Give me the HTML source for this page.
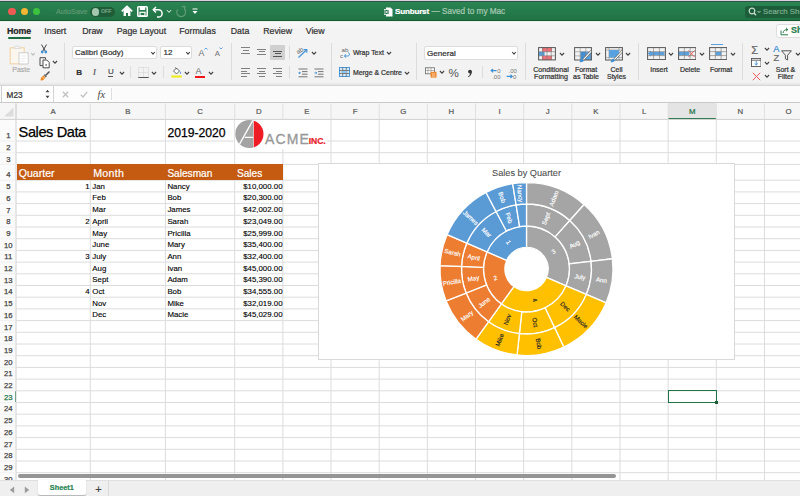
<!DOCTYPE html><html><head><meta charset="utf-8"><style>
*{margin:0;padding:0;box-sizing:border-box}
html,body{width:800px;height:496px;overflow:hidden;background:#fff;font-family:"Liberation Sans", sans-serif}
.a{position:absolute;white-space:nowrap;-webkit-text-stroke-width:0.22px}
</style></head><body><div class="a" style="left:0;top:0;width:800px;height:1px;background:#dccfe3"></div>
<div class="a" style="left:0;top:1px;width:800px;height:20px;background:linear-gradient(#2c8553,#1f7144)"></div>
<div class="a" style="left:0;top:1px;width:800px;height:1px;background:#2b5a43"></div>
<div class="a" style="left:0;top:20px;width:800px;height:1px;background:#175b35"></div>
<div class="a" style="left:0;top:21px;width:800px;height:1px;background:#e9eee9"></div>
<div class="a" style="left:0;top:22px;width:800px;height:63px;background:linear-gradient(#f7f7f7 0px,#f3f3f3 8px,#f2f2f2 63px)"></div>
<div class="a" style="left:8.2px;top:7.8999999999999995px;width:7.6px;height:7.6px;border-radius:50%;background:#ee5a54"></div>
<div class="a" style="left:20.7px;top:7.8999999999999995px;width:7.6px;height:7.6px;border-radius:50%;background:#f5b534"></div>
<div class="a" style="left:32.7px;top:7.8999999999999995px;width:7.6px;height:7.6px;border-radius:50%;background:#3cc23f"></div>
<div class="a" style="left:56.00px;top:7.31px;font-size:7.3px;line-height:9.12px;color:#5f9872">AutoSave</div>
<div class="a" style="left:90px;top:6.5px;width:25px;height:10px;border-radius:5px;background:#1f5d39"></div>
<div class="a" style="left:91.5px;top:8px;width:7.5px;height:7.5px;border-radius:50%;background:#a3c8ae"></div>
<div class="a" style="left:101px;top:8px;font-size:5.2px;font-weight:bold;color:#6f9f80;line-height:7px">OFF</div>
<svg class="a" style="left:121px;top:4.5px" width="12" height="12" viewBox="0 0 12 12"><path d="M0.8 6.4 L6 1.4 L11.2 6.4" fill="none" stroke="#fff" stroke-width="1.7" stroke-linejoin="miter"/><path d="M2.6 5.6 L6 2.6 L9.4 5.6 V11 H7 V8 H5 V11 H2.6 Z" fill="#fff"/></svg>
<svg class="a" style="left:137px;top:6px" width="11" height="11" viewBox="0 0 11 11"><rect x="0.8" y="0.8" width="9.4" height="9.4" rx="0.8" fill="none" stroke="#fff" stroke-width="1.5"/><rect x="2.8" y="1" width="5.4" height="3" fill="#fff"/><rect x="3" y="6.3" width="5" height="3.5" fill="none" stroke="#fff" stroke-width="1.2"/></svg>
<svg class="a" style="left:152px;top:5px" width="12" height="13" viewBox="0 0 12 13"><path d="M4 2 L1.3 4.8 L4 7.6" fill="none" stroke="#fff" stroke-width="1.5"/><path d="M1.5 4.8 H6.5 A3.6 3.6 0 0 1 6.5 12 H5" fill="none" stroke="#fff" stroke-width="1.5"/></svg>
<svg class="a" style="left:166px;top:9px" width="6" height="5" viewBox="0 0 6 5"><path d="M1 1.2 L3 3.4 L5 1.2" fill="none" stroke="#fff" stroke-width="1"/></svg>
<svg class="a" style="left:175px;top:4.5px" width="12" height="13" viewBox="0 0 12 13"><path d="M2.6 4.6 A4.4 4.4 0 1 0 9.4 4.2" fill="none" stroke="#5f9c74" stroke-width="1.3"/><path d="M6.8 1.6 L9.9 1.4 L9.6 4.6" fill="none" stroke="#5f9c74" stroke-width="1.3"/></svg>
<svg class="a" style="left:192px;top:8px" width="6" height="7" viewBox="0 0 6 7"><rect x="0.5" y="0.5" width="5" height="1" fill="#fff"/><path d="M0.5 3 L3 6 L5.5 3 Z" fill="#fff"/></svg>
<svg class="a" style="left:383.5px;top:6.5px" width="9" height="10" viewBox="0 0 9 10"><path d="M2 0.5 H6.5 L8.5 2.5 V9.5 H2 Z" fill="#fff"/><rect x="0" y="2.5" width="5" height="5" fill="#1f7145" stroke="#fff" stroke-width="0.8"/><path d="M1.3 3.6 L3.7 6.4 M3.7 3.6 L1.3 6.4" stroke="#fff" stroke-width="0.9"/></svg>
<div class="a" style="left:395.00px;top:6.73px;font-size:8.1px;line-height:10.12px;color:#fff;font-weight:bold;letter-spacing:-0.2px">Sunburst</div>
<div class="a" style="left:431.50px;top:6.63px;font-size:8.2px;line-height:10.25px;color:#a5c9b2">— Saved to my Mac</div>
<div class="a" style="left:745px;top:5.5px;width:70px;height:12px;border-radius:3px;background:#1c5e39"></div>
<svg class="a" style="left:748px;top:6.5px" width="14" height="10" viewBox="0 0 14 10"><circle cx="4" cy="4" r="2.8" fill="none" stroke="#c7dccd" stroke-width="1.2"/><path d="M6 6 L8 8.3" stroke="#c7dccd" stroke-width="1.4"/><path d="M9.5 4 L11 5.5 L12.5 4" fill="none" stroke="#c7dccd" stroke-width="0.9"/></svg>
<div class="a" style="left:763.00px;top:6.82px;font-size:7.8px;line-height:9.75px;color:#7dab8e">Search Sheet</div>
<div class="a" style="left:7.10px;top:25.95px;font-size:8.8px;line-height:11.0px;color:#333;font-weight:bold;letter-spacing:-0.1px;color:#262626">Home</div>
<div class="a" style="left:44.20px;top:25.95px;font-size:8.8px;line-height:11.0px;color:#333;">Insert</div>
<div class="a" style="left:82.20px;top:25.95px;font-size:8.8px;line-height:11.0px;color:#333;">Draw</div>
<div class="a" style="left:116.70px;top:25.95px;font-size:8.8px;line-height:11.0px;color:#333;">Page Layout</div>
<div class="a" style="left:179.20px;top:25.95px;font-size:8.8px;line-height:11.0px;color:#333;">Formulas</div>
<div class="a" style="left:230.70px;top:25.95px;font-size:8.8px;line-height:11.0px;color:#333;">Data</div>
<div class="a" style="left:263.20px;top:25.95px;font-size:8.8px;line-height:11.0px;color:#333;">Review</div>
<div class="a" style="left:305.70px;top:25.95px;font-size:8.8px;line-height:11.0px;color:#333;">View</div>
<div class="a" style="left:7.5px;top:37px;width:23px;height:1.6px;background:#1d6b40;border-radius:1px"></div>
<div class="a" style="left:776px;top:23.8px;width:40px;height:14px;border-radius:3px;background:#fff;border:1px solid #dedede"></div>
<svg class="a" style="left:780px;top:26px" width="10" height="10" viewBox="0 0 10 10"><path d="M1 4.5 V8.8 H8" fill="none" stroke="#2a7a4c" stroke-width="1"/><path d="M3 7 C3.5 4.5 5 3.5 7.5 3.5 M6 1.8 L7.8 3.5 L6 5.2" fill="none" stroke="#2a7a4c" stroke-width="1"/></svg>
<div class="a" style="left:791px;top:25px;font-size:9px;font-weight:bold;color:#2a7a4c;line-height:11px">Share</div>
<div class="a" style="left:0;top:81.5px;width:800px;height:3.5px;background:linear-gradient(rgba(0,0,0,0),rgba(0,0,0,0.06))"></div>
<div class="a" style="left:0;top:84.5px;width:800px;height:1px;background:#d6d6d6"></div>
<div class="a" style="left:64.00px;top:42.5px;width:1px;height:37.5px;background:#dcdcdc"></div>
<div class="a" style="left:231.20px;top:42.5px;width:1px;height:37.5px;background:#dcdcdc"></div>
<div class="a" style="left:330.50px;top:42.5px;width:1px;height:37.5px;background:#dcdcdc"></div>
<div class="a" style="left:415.50px;top:42.5px;width:1px;height:37.5px;background:#dcdcdc"></div>
<div class="a" style="left:524.70px;top:42.5px;width:1px;height:37.5px;background:#dcdcdc"></div>
<div class="a" style="left:637.70px;top:42.5px;width:1px;height:37.5px;background:#dcdcdc"></div>
<div class="a" style="left:741.80px;top:42.5px;width:1px;height:37.5px;background:#dcdcdc"></div>
<div class="a" style="left:130.10px;top:66px;width:1px;height:12px;background:#dcdcdc"></div>
<div class="a" style="left:162.90px;top:66px;width:1px;height:12px;background:#dcdcdc"></div>
<div class="a" style="left:289.20px;top:46px;width:1px;height:13px;background:#dcdcdc"></div>
<div class="a" style="left:289.20px;top:66px;width:1px;height:12px;background:#dcdcdc"></div>
<div class="a" style="left:482.00px;top:66px;width:1px;height:12px;background:#dcdcdc"></div>
<svg class="a" style="left:9px;top:44px" width="21" height="21" viewBox="0 0 21 21">
<rect x="1.2" y="3.8" width="14" height="16" fill="#fbf6ee" stroke="#f2d3a6" stroke-width="1.1"/>
<path d="M5 4.5 L6 2.2 H10.4 L11.4 4.5 Z" fill="#f4f4f4" stroke="#d6d6d6" stroke-width="0.8"/>
<rect x="10" y="8.8" width="9.2" height="11.2" fill="#fff" stroke="#cdcdcd" stroke-width="1"/>
<path d="M12 12 H17 M12 14.5 H17 M12 17 H16" stroke="#e6e6e6" stroke-width="0.8"/>
</svg>
<svg class="a" style="left:29.50px;top:52.00px" width="6" height="4" viewBox="0 0 6 4"><path d="M1.20 1 L3 3.1 L4.80 1" fill="none" stroke="#bbb" stroke-width="1.1"/></svg>
<div class="a" style="left:-78.80px;width:200px;text-align:center;top:66.20px;font-size:7px;line-height:8.75px;color:#a4a4a4;-webkit-text-stroke-width:0.1px">Paste</div>
<svg class="a" style="left:39.5px;top:44px" width="8" height="10" viewBox="0 0 8 10">
<path d="M1.5 0.5 L5.2 7 M6.5 0.5 L2.8 7" stroke="#444" stroke-width="1"/>
<circle cx="2.2" cy="8" r="1.4" fill="#3d8fd6"/><circle cx="5.8" cy="8" r="1.4" fill="#3d8fd6"/>
</svg>
<svg class="a" style="left:38.5px;top:57px" width="11" height="11.5" viewBox="0 0 11 11.5">
<path d="M6.5 2.3 V0.7 H1 V8.6 H3.8" fill="none" stroke="#444" stroke-width="0.95"/>
<path d="M4 3 H7.8 L10.2 5.4 V10.8 H4 Z" fill="#fff" stroke="#444" stroke-width="0.95"/>
<rect x="6.4" y="7.2" width="1.5" height="1.5" fill="#666"/>
</svg>
<svg class="a" style="left:51.50px;top:60.40px" width="6" height="4" viewBox="0 0 6 4"><path d="M0.90 1 L3 3.1 L5.10 1" fill="none" stroke="#444" stroke-width="1.1"/></svg>
<svg class="a" style="left:39.5px;top:70.5px" width="10" height="10" viewBox="0 0 10 10">
<path d="M6 4 L9 1" stroke="#555" stroke-width="1.6" stroke-linecap="round"/>
<path d="M4.6 3.2 L6.8 5.4 L5.8 6.4 L3.6 4.2 Z" fill="#666"/>
<path d="M3.3 4.5 L5.5 6.7 L3.6 8.8 C2.6 9.6 1.2 9.6 0.6 9.2 C0.6 8 1 6.7 1.5 6.3 Z" fill="#f08a24"/>
<path d="M2.2 5.8 L4.4 8" stroke="#fff" stroke-width="0.5"/>
</svg>
<div class="a" style="left:71.6px;top:45.6px;width:85.8px;height:13.8px;background:#fff;border:1px solid #dcdcdc;border-radius:2px"></div>
<div class="a" style="left:75.00px;top:48.23px;font-size:8px;line-height:10.0px;color:#333">Calibri (Body)</div>
<svg class="a" style="left:150.00px;top:50.50px" width="6" height="4" viewBox="0 0 6 4"><path d="M1.20 1 L3 3.1 L4.80 1" fill="none" stroke="#444" stroke-width="1.1"/></svg>
<div class="a" style="left:160px;top:45.6px;width:32px;height:13.8px;background:#fff;border:1px solid #dcdcdc;border-radius:2px"></div>
<div class="a" style="left:163.60px;top:48.23px;font-size:8px;line-height:10.0px;color:#333">12</div>
<svg class="a" style="left:185.00px;top:50.50px" width="6" height="4" viewBox="0 0 6 4"><path d="M1.20 1 L3 3.1 L4.80 1" fill="none" stroke="#444" stroke-width="1.1"/></svg>
<div class="a" style="left:198.60px;top:47.95px;font-size:8.8px;line-height:11.0px;color:#707070;-webkit-text-stroke-width:0">A</div>
<svg class="a" style="left:204px;top:47px" width="4" height="3" viewBox="0 0 4 3"><path d="M0.5 2.5 L2 1 L3.5 2.5" fill="none" stroke="#3d8fd6" stroke-width="0.8"/></svg>
<div class="a" style="left:214.80px;top:48.92px;font-size:7.8px;line-height:9.75px;color:#707070;-webkit-text-stroke-width:0">A</div>
<svg class="a" style="left:219px;top:47px" width="4" height="3" viewBox="0 0 4 3"><path d="M0.5 0.5 L2 2 L3.5 0.5" fill="none" stroke="#3d8fd6" stroke-width="0.8"/></svg>
<div class="a" style="left:76.30px;top:67.53px;font-size:8px;line-height:10.0px;color:#333;font-weight:bold">B</div>
<div class="a" style="left:93.00px;top:67.04px;font-size:8.5px;line-height:10.62px;color:#555;font-family:&quot;Liberation Serif&quot;,serif;font-style:italic">I</div>
<div class="a" style="left:108.00px;top:67.03px;font-size:8px;line-height:10.0px;color:#555">U</div>
<div class="a" style="left:107.8px;top:76.2px;width:5.6px;height:0.9px;background:#555"></div>
<svg class="a" style="left:119.00px;top:70.50px" width="6" height="4" viewBox="0 0 6 4"><path d="M0.90 1 L3 3.1 L5.10 1" fill="none" stroke="#444" stroke-width="1.1"/></svg>
<svg class="a" style="left:137.5px;top:66.5px" width="11" height="11" viewBox="0 0 11 11"><rect x="0.5" y="0.5" width="10" height="10" fill="none" stroke="#c8c8c8" stroke-width="0.8" stroke-dasharray="1 1"/><path d="M5.5 0.5 V10.5 M0.5 5.5 H10.5" stroke="#c8c8c8" stroke-width="0.8" stroke-dasharray="1 1"/><path d="M0.3 10.5 H10.7" stroke="#555" stroke-width="1"/></svg>
<svg class="a" style="left:151.40px;top:70.50px" width="6" height="4" viewBox="0 0 6 4"><path d="M0.90 1 L3 3.1 L5.10 1" fill="none" stroke="#444" stroke-width="1.1"/></svg>
<svg class="a" style="left:171px;top:66px" width="11" height="12" viewBox="0 0 11 12"><path d="M2.5 5 L5.5 2 L8.5 5 L5.5 8 Z" fill="#fff" stroke="#555" stroke-width="0.9"/><path d="M4.2 1.5 L5.8 3" stroke="#555" stroke-width="0.9"/><path d="M8.8 5.5 C9.8 6.8 9.8 7.5 9.2 7.8" fill="#3d8fd6" stroke="#3d8fd6" stroke-width="0.8"/><rect x="0.3" y="9.5" width="10.4" height="2" fill="#f0ec10"/></svg>
<svg class="a" style="left:184.00px;top:70.50px" width="6" height="4" viewBox="0 0 6 4"><path d="M0.90 1 L3 3.1 L5.10 1" fill="none" stroke="#444" stroke-width="1.1"/></svg>
<div class="a" style="left:195.60px;top:66.46px;font-size:9px;line-height:11.25px;color:#666;-webkit-text-stroke-width:0">A</div>
<div class="a" style="left:194.8px;top:76.3px;width:10px;height:2px;background:#f01818"></div>
<svg class="a" style="left:207.60px;top:70.50px" width="6" height="4" viewBox="0 0 6 4"><path d="M0.90 1 L3 3.1 L5.10 1" fill="none" stroke="#444" stroke-width="1.1"/></svg>
<div class="a" style="left:270px;top:45.2px;width:14.8px;height:14.5px;background:#d0d0d0;border-radius:1px"></div>
<div class="a" style="left:241.00px;top:47.30px;width:9px;height:1px;background:#808080"></div><div class="a" style="left:242.50px;top:49.90px;width:6px;height:1px;background:#808080"></div><div class="a" style="left:241.00px;top:52.50px;width:9px;height:1px;background:#808080"></div>
<div class="a" style="left:257.00px;top:49.00px;width:9px;height:1px;background:#808080"></div><div class="a" style="left:258.50px;top:51.40px;width:6px;height:1px;background:#808080"></div><div class="a" style="left:257.00px;top:53.80px;width:9px;height:1px;background:#808080"></div>
<div class="a" style="left:273.00px;top:50.80px;width:9px;height:1px;background:#555"></div><div class="a" style="left:274.50px;top:53.40px;width:6px;height:1px;background:#555"></div><div class="a" style="left:273.00px;top:56.00px;width:9px;height:1px;background:#555"></div>
<div class="a" style="left:241.00px;top:68.00px;width:9px;height:1px;background:#808080"></div><div class="a" style="left:241.00px;top:70.60px;width:6px;height:1px;background:#808080"></div><div class="a" style="left:241.00px;top:73.20px;width:9px;height:1px;background:#808080"></div><div class="a" style="left:241.00px;top:75.80px;width:6px;height:1px;background:#808080"></div>
<div class="a" style="left:257.00px;top:68.00px;width:9px;height:1px;background:#808080"></div><div class="a" style="left:258.50px;top:70.60px;width:6px;height:1px;background:#808080"></div><div class="a" style="left:257.00px;top:73.20px;width:9px;height:1px;background:#808080"></div><div class="a" style="left:258.50px;top:75.80px;width:6px;height:1px;background:#808080"></div>
<div class="a" style="left:273.00px;top:68.00px;width:9px;height:1px;background:#808080"></div><div class="a" style="left:276.00px;top:70.60px;width:6px;height:1px;background:#808080"></div><div class="a" style="left:273.00px;top:73.20px;width:9px;height:1px;background:#808080"></div><div class="a" style="left:276.00px;top:75.80px;width:6px;height:1px;background:#808080"></div>
<svg class="a" style="left:296px;top:45.5px" width="13" height="13" viewBox="0 0 13 13"><text x="0.3" y="7" font-size="6.4" font-family="Liberation Sans" fill="#666" transform="rotate(-35 3.5 5)">ab</text><path d="M2.5 11.5 L10.5 4" stroke="#3d8fd6" stroke-width="1.1"/><path d="M7.6 3.6 L10.8 3.6 L10.8 6.8" fill="none" stroke="#3d8fd6" stroke-width="1.1"/></svg>
<svg class="a" style="left:310.50px;top:50.50px" width="6" height="4" viewBox="0 0 6 4"><path d="M0.90 1 L3 3.1 L5.10 1" fill="none" stroke="#444" stroke-width="1.1"/></svg>
<svg class="a" style="left:297.5px;top:67.5px" width="10" height="10" viewBox="0 0 10 10"><path d="M0.5 1 H9.5 M4 3.6 H9.5 M4 6.2 H9.5 M0.5 8.8 H9.5" stroke="#666" stroke-width="0.9"/><path d="M3 4.9 H0.8 M2 3.8 L0.8 4.9 L2 6" fill="none" stroke="#3d8fd6" stroke-width="0.9"/></svg>
<svg class="a" style="left:313.5px;top:67.5px" width="10" height="10" viewBox="0 0 10 10"><path d="M0.5 1 H9.5 M4 3.6 H9.5 M4 6.2 H9.5 M0.5 8.8 H9.5" stroke="#666" stroke-width="0.9"/><path d="M0.5 4.9 H2.8 M1.7 3.8 L2.9 4.9 L1.7 6" fill="none" stroke="#3d8fd6" stroke-width="0.9"/></svg>
<svg class="a" style="left:339.5px;top:47px" width="11" height="12" viewBox="0 0 11 12"><text x="1.5" y="5.2" font-size="6.2" font-family="Liberation Sans" fill="#666">ab</text><text x="0" y="11" font-size="6.2" font-family="Liberation Sans" fill="#666">c</text><path d="M8.2 5.6 C10 6.2 10 9 7.5 9 H4.5 M6 7.4 L4.3 9 L6 10.6" fill="none" stroke="#3d8fd6" stroke-width="1"/></svg>
<div class="a" style="left:352.90px;top:48.85px;font-size:6.95px;line-height:8.69px;color:#333">Wrap Text</div>
<svg class="a" style="left:386.00px;top:51.00px" width="6" height="4" viewBox="0 0 6 4"><path d="M0.90 1 L3 3.1 L5.10 1" fill="none" stroke="#444" stroke-width="1.1"/></svg>
<svg class="a" style="left:338.5px;top:67px" width="11" height="10" viewBox="0 0 11 10"><rect x="0.5" y="0.5" width="10" height="9" fill="#d6e8f7" stroke="#3d8fd6" stroke-width="0.9"/><path d="M0.5 3.5 H10.5 M0.5 6.5 H10.5 M3.7 0.5 V3.5 M7.3 0.5 V3.5 M3.7 6.5 V9.5 M7.3 6.5 V9.5" stroke="#555" stroke-width="0.7"/><path d="M2.5 5 H8.5" stroke="#3d8fd6" stroke-width="0.9"/></svg>
<div class="a" style="left:352.90px;top:68.65px;font-size:6.95px;line-height:8.69px;color:#333">Merge &amp; Centre</div>
<svg class="a" style="left:403.90px;top:70.80px" width="6" height="4" viewBox="0 0 6 4"><path d="M0.90 1 L3 3.1 L5.10 1" fill="none" stroke="#444" stroke-width="1.1"/></svg>
<div class="a" style="left:423.7px;top:45.5px;width:94.4px;height:14.2px;background:#fff;border:1px solid #dcdcdc;border-radius:2px"></div>
<div class="a" style="left:427.00px;top:48.93px;font-size:8.1px;line-height:10.12px;color:#333">General</div>
<svg class="a" style="left:511.00px;top:50.60px" width="6" height="4" viewBox="0 0 6 4"><path d="M1.20 1 L3 3.1 L4.80 1" fill="none" stroke="#444" stroke-width="1.1"/></svg>
<svg class="a" style="left:424.5px;top:67px" width="12" height="11" viewBox="0 0 12 11"><rect x="0.5" y="0.8" width="9" height="6" fill="#fff" stroke="#666" stroke-width="0.8"/><path d="M0.5 3.5 H9.5 M3 0.8 V6.8 M6 0.8 V6.8" stroke="#888" stroke-width="0.6"/><rect x="5.5" y="4.8" width="6" height="5.8" fill="#f08a30"/><path d="M7 7 H10 M7 9 H10" stroke="#fff" stroke-width="0.6"/></svg>
<svg class="a" style="left:439.00px;top:70.30px" width="6" height="4" viewBox="0 0 6 4"><path d="M0.90 1 L3 3.1 L5.10 1" fill="none" stroke="#444" stroke-width="1.1"/></svg>
<div class="a" style="left:448.60px;top:66.33px;font-size:11.6px;line-height:14.5px;color:#555;-webkit-text-stroke-width:0">%</div>
<svg class="a" style="left:466px;top:68.5px" width="7" height="9" viewBox="0 0 7 9"><circle cx="4" cy="2.6" r="1.9" fill="#333"/><path d="M5.8 2.8 C5.8 5.5 4.5 7.2 2.2 8.2 L1.9 7.6 C3.3 6.7 4 5.5 4 4.4 Z" fill="#333"/></svg>
<svg class="a" style="left:489.5px;top:66.5px" width="12" height="12" viewBox="0 0 12 12"><path d="M6.6 3.6 H1.2 M3 1.8 L1.1 3.6 L3 5.4" fill="none" stroke="#3d8fd6" stroke-width="1.1"/><text x="7.2" y="6" font-size="6" font-family="Liberation Sans" fill="#777">0</text><text x="2.2" y="11.6" font-size="6" font-family="Liberation Sans" fill="#777">.00</text></svg>
<svg class="a" style="left:506px;top:66.5px" width="12" height="12" viewBox="0 0 12 12"><text x="2.6" y="6" font-size="6" font-family="Liberation Sans" fill="#777">.00</text><path d="M0.6 9.4 H6.2 M4.4 7.6 L6.3 9.4 L4.4 11.2" fill="none" stroke="#3d8fd6" stroke-width="1.1"/><text x="7" y="11.6" font-size="6" font-family="Liberation Sans" fill="#777">0</text></svg>
<svg class="a" style="left:538px;top:47px" width="18" height="13.5" viewBox="0 0 18 13.5"><rect x="4" y="0.6" width="10" height="4.2" fill="#f2737a"/><rect x="4" y="8.8" width="10" height="4.2" fill="#f2737a"/><rect x="0.6" y="4.8" width="6" height="4" fill="#5aa1e0"/><rect x="0.6" y="0.6" width="16.8" height="12.3" fill="none" stroke="#555" stroke-width="1"/><path d="M4.80 0.6 V12.9" stroke="#777" stroke-width="0.6"/><path d="M9.00 0.6 V12.9" stroke="#777" stroke-width="0.6"/><path d="M13.20 0.6 V12.9" stroke="#777" stroke-width="0.6"/><path d="M0.6 4.70 H17.4" stroke="#777" stroke-width="0.6"/><path d="M0.6 8.80 H17.4" stroke="#777" stroke-width="0.6"/></svg>
<svg class="a" style="left:559.00px;top:51.50px" width="6" height="4" viewBox="0 0 6 4"><path d="M0.90 1 L3 3.1 L5.10 1" fill="none" stroke="#444" stroke-width="1.1"/></svg>
<div class="a" style="left:451.00px;width:200px;text-align:center;top:65.70px;font-size:7.1px;line-height:8.88px;color:#333">Conditional</div>
<div class="a" style="left:451.00px;width:200px;text-align:center;top:72.90px;font-size:7.1px;line-height:8.88px;color:#333">Formatting</div>
<svg class="a" style="left:573.5px;top:47px" width="20" height="16" viewBox="0 0 20 16"><rect x="6.6" y="4.8" width="11" height="8.2" fill="#5aa1e0"/><rect x="6.6" y="4.8" width="5.5" height="8.2" fill="#3f8fd8"/><rect x="0.6" y="0.6" width="16.8" height="12.4" fill="none" stroke="#555" stroke-width="1"/><path d="M6.2 0.6 V13 M11.8 0.6 V13 M0.6 4.7 H17.4 M0.6 8.9 H17.4" stroke="#888" stroke-width="0.6"/><path d="M8.6 12.2 L16.6 3.6 L17.8 4.8 L9.8 13.4 Z" fill="#fff" stroke="#555" stroke-width="0.7"/><path d="M5.6 15 C6 13 7.4 11.6 8.8 11.9 L9.9 13.2 C9.6 14.6 7.6 15.6 5.6 15 Z" fill="#3d8fd6"/></svg>
<svg class="a" style="left:594.50px;top:51.50px" width="6" height="4" viewBox="0 0 6 4"><path d="M0.90 1 L3 3.1 L5.10 1" fill="none" stroke="#444" stroke-width="1.1"/></svg>
<div class="a" style="left:486.00px;width:200px;text-align:center;top:65.80px;font-size:7.0px;line-height:8.75px;color:#333">Format</div>
<div class="a" style="left:486.00px;width:200px;text-align:center;top:73.00px;font-size:7.0px;line-height:8.75px;color:#333">as Table</div>
<svg class="a" style="left:604.5px;top:47px" width="20" height="16" viewBox="0 0 20 16"><rect x="0.6" y="0.6" width="16.8" height="12.4" fill="none" stroke="#555" stroke-width="1"/><path d="M4 0.6 V13 M14 0.6 V13 M0.6 3 H17.4 M0.6 10.5 H17.4" stroke="#888" stroke-width="0.6"/><rect x="4" y="3" width="10" height="7.5" fill="#5aa1e0"/><path d="M8.6 12.2 L16.6 3.6 L17.8 4.8 L9.8 13.4 Z" fill="#fff" stroke="#555" stroke-width="0.7"/><path d="M5.6 15 C6 13 7.4 11.6 8.8 11.9 L9.9 13.2 C9.6 14.6 7.6 15.6 5.6 15 Z" fill="#3d8fd6"/></svg>
<svg class="a" style="left:625.00px;top:51.50px" width="6" height="4" viewBox="0 0 6 4"><path d="M0.90 1 L3 3.1 L5.10 1" fill="none" stroke="#444" stroke-width="1.1"/></svg>
<div class="a" style="left:516.50px;width:200px;text-align:center;top:65.80px;font-size:7.0px;line-height:8.75px;color:#333">Cell</div>
<div class="a" style="left:516.50px;width:200px;text-align:center;top:73.00px;font-size:7.0px;line-height:8.75px;color:#333">Styles</div>
<svg class="a" style="left:646.5px;top:47.3px" width="19" height="13.2" viewBox="0 0 19 13.2"><path d="M0.8 6.6 L4 3.5 V5 H17.5 V8.2 H4 V9.7 Z" fill="#5aa1e0"/><rect x="0.6" y="0.6" width="17.8" height="12.0" fill="none" stroke="#555" stroke-width="1"/><path d="M6.53 0.6 V12.6" stroke="#777" stroke-width="0.6"/><path d="M12.47 0.6 V12.6" stroke="#777" stroke-width="0.6"/><path d="M0.6 4.60 H18.4" stroke="#777" stroke-width="0.6"/><path d="M0.6 8.60 H18.4" stroke="#777" stroke-width="0.6"/></svg>
<svg class="a" style="left:668.00px;top:51.80px" width="6" height="4" viewBox="0 0 6 4"><path d="M0.90 1 L3 3.1 L5.10 1" fill="none" stroke="#444" stroke-width="1.1"/></svg>
<div class="a" style="left:559.00px;width:200px;text-align:center;top:66.00px;font-size:7.0px;line-height:8.75px;color:#333">Insert</div>
<svg class="a" style="left:677.5px;top:47.3px" width="18.5" height="13.2" viewBox="0 0 18.5 13.2"><rect x="0.6" y="4.8" width="10.5" height="3.6" fill="#5aa1e0"/><path d="M10.5 3.5 L16.5 10 M16.5 3.5 L10.5 10" stroke="#f25a5a" stroke-width="1"/><rect x="0.6" y="0.6" width="17.3" height="12.0" fill="none" stroke="#555" stroke-width="1"/><path d="M6.37 0.6 V12.6" stroke="#777" stroke-width="0.6"/><path d="M12.13 0.6 V12.6" stroke="#777" stroke-width="0.6"/><path d="M0.6 4.60 H17.9" stroke="#777" stroke-width="0.6"/><path d="M0.6 8.60 H17.9" stroke="#777" stroke-width="0.6"/></svg>
<svg class="a" style="left:699.00px;top:51.80px" width="6" height="4" viewBox="0 0 6 4"><path d="M0.90 1 L3 3.1 L5.10 1" fill="none" stroke="#444" stroke-width="1.1"/></svg>
<div class="a" style="left:590.00px;width:200px;text-align:center;top:66.00px;font-size:7.0px;line-height:8.75px;color:#333">Delete</div>
<div class="a" style="left:711px;top:44.3px;width:12px;height:1px;background:#5aa1e0"></div>
<svg class="a" style="left:708.5px;top:47.3px" width="18.5" height="13.2" viewBox="0 0 18.5 13.2"><rect x="6.5" y="4.8" width="5.8" height="3.6" fill="#5aa1e0"/><rect x="0.6" y="0.6" width="17.3" height="12.0" fill="none" stroke="#555" stroke-width="1"/><path d="M6.37 0.6 V12.6" stroke="#777" stroke-width="0.6"/><path d="M12.13 0.6 V12.6" stroke="#777" stroke-width="0.6"/><path d="M0.6 4.60 H17.9" stroke="#777" stroke-width="0.6"/><path d="M0.6 8.60 H17.9" stroke="#777" stroke-width="0.6"/></svg>
<svg class="a" style="left:729.50px;top:51.80px" width="6" height="4" viewBox="0 0 6 4"><path d="M0.90 1 L3 3.1 L5.10 1" fill="none" stroke="#444" stroke-width="1.1"/></svg>
<div class="a" style="left:621.00px;width:200px;text-align:center;top:66.00px;font-size:7.0px;line-height:8.75px;color:#333">Format</div>
<div class="a" style="left:751.20px;top:42.92px;font-size:11.2px;line-height:14.0px;color:#666">&#x3A3;</div>
<svg class="a" style="left:763.50px;top:47.20px" width="6" height="4" viewBox="0 0 6 4"><path d="M0.90 1 L3 3.1 L5.10 1" fill="none" stroke="#444" stroke-width="1.1"/></svg>
<svg class="a" style="left:750.5px;top:58px" width="10.5" height="9" viewBox="0 0 10.5 9"><rect x="0.5" y="0.5" width="9.5" height="8" fill="#fff" stroke="#555" stroke-width="0.9"/><path d="M0.5 2.2 H10" stroke="#555" stroke-width="0.9"/><path d="M5.25 3 V7 M3.6 5.4 L5.25 7 L6.9 5.4" fill="none" stroke="#3d8fd6" stroke-width="0.9"/></svg>
<svg class="a" style="left:763.50px;top:60.80px" width="6" height="4" viewBox="0 0 6 4"><path d="M0.90 1 L3 3.1 L5.10 1" fill="none" stroke="#444" stroke-width="1.1"/></svg>
<svg class="a" style="left:751.5px;top:71.5px" width="9" height="9" viewBox="0 0 9 9"><path d="M0.8 0.8 L8.2 8.2 M8.2 0.8 L0.8 8.2" stroke="#f25a5a" stroke-width="1"/></svg>
<svg class="a" style="left:763.50px;top:74.20px" width="6" height="4" viewBox="0 0 6 4"><path d="M0.90 1 L3 3.1 L5.10 1" fill="none" stroke="#444" stroke-width="1.1"/></svg>
<div class="a" style="left:773.20px;top:44.17px;font-size:9.3px;line-height:11.62px;color:#3d8fd6">A</div>
<div class="a" style="left:773.40px;top:52.97px;font-size:9.3px;line-height:11.62px;color:#666">Z</div>
<svg class="a" style="left:780.5px;top:49.5px" width="11" height="11" viewBox="0 0 11 11"><path d="M0.6 0.8 H10.4 L6.6 5.2 V10 L4.4 8.8 V5.2 Z" fill="none" stroke="#555" stroke-width="1"/></svg>
<svg class="a" style="left:794.50px;top:52.00px" width="6" height="4" viewBox="0 0 6 4"><path d="M0.90 1 L3 3.1 L5.10 1" fill="none" stroke="#444" stroke-width="1.1"/></svg>
<div class="a" style="left:685.50px;width:200px;text-align:center;top:66.00px;font-size:7.0px;line-height:8.75px;color:#333">Sort &amp;</div>
<div class="a" style="left:685.50px;width:200px;text-align:center;top:73.00px;font-size:7.0px;line-height:8.75px;color:#333">Filter</div>
<div class="a" style="left:0;top:85.5px;width:800px;height:17px;background:#fbfbfb"></div>
<div class="a" style="left:0;top:102px;width:800px;height:1.3px;background:#c9c9c9"></div>
<div class="a" style="left:0.5px;top:86px;width:52px;height:16px;background:#fff;border-left:1px solid #cfcfcf"></div>
<div class="a" style="left:6.60px;top:90.83px;font-size:8.2px;line-height:10.25px;color:#333">M23</div>
<svg class="a" style="left:45px;top:89px" width="5" height="10" viewBox="0 0 5 10"><path d="M0.5 3.2 L2.5 0.8 L4.5 3.2 Z M0.5 6.8 L2.5 9.2 L4.5 6.8 Z" fill="#444"/></svg>
<div class="a" style="left:52.5px;top:86px;width:60px;height:16px;background:#fdfdfd;border-left:1px solid #d4d4d4"></div>
<svg class="a" style="left:61.5px;top:90.5px" width="7" height="7" viewBox="0 0 7 7"><path d="M0.8 0.8 L6.2 6.2 M6.2 0.8 L0.8 6.2" stroke="#c2c2c2" stroke-width="1.3"/></svg>
<svg class="a" style="left:79.5px;top:90.5px" width="8" height="7" viewBox="0 0 8 7"><path d="M0.8 3.8 L3 6 L7.2 0.8" fill="none" stroke="#c2c2c2" stroke-width="1.3"/></svg>
<div class="a" style="left:97.60px;top:88.10px;font-size:10.4px;line-height:13.0px;color:#444;-webkit-text-stroke-width:0;font-family:&quot;Liberation Serif&quot;,serif"><i>fx</i></div>
<div class="a" style="left:111.10px;top:88px;width:1px;height:12px;background:#dedede"></div>
<div class="a" style="left:0;top:103.3px;width:800px;height:16px;background:#f6f6f6"></div>
<svg class="a" style="left:3px;top:107px" width="11" height="10" viewBox="0 0 11 10"><path d="M10.5 0.5 V9.5 H1 Z" fill="#dcdcdc"/></svg>
<div class="a" style="left:0;top:119.4px;width:16px;height:361px;background:#fbfbfb"></div>
<div class="a" style="left:668.14px;top:103.3px;width:48.16px;height:16px;background:#e4e4e4"></div>
<div class="a" style="left:668.14px;top:117.6px;width:48.16px;height:1.6px;background:#217346"></div>
<div class="a" style="left:-46.85px;width:200px;text-align:center;top:106.62px;font-size:7.8px;line-height:9.75px;color:#595959">A</div>
<div class="a" style="left:27.85px;width:200px;text-align:center;top:106.62px;font-size:7.8px;line-height:9.75px;color:#595959">B</div>
<div class="a" style="left:100.05px;width:200px;text-align:center;top:106.62px;font-size:7.8px;line-height:9.75px;color:#595959">C</div>
<div class="a" style="left:158.78px;width:200px;text-align:center;top:106.62px;font-size:7.8px;line-height:9.75px;color:#595959">D</div>
<div class="a" style="left:206.94px;width:200px;text-align:center;top:106.62px;font-size:7.8px;line-height:9.75px;color:#595959">E</div>
<div class="a" style="left:255.10px;width:200px;text-align:center;top:106.62px;font-size:7.8px;line-height:9.75px;color:#595959">F</div>
<div class="a" style="left:303.26px;width:200px;text-align:center;top:106.62px;font-size:7.8px;line-height:9.75px;color:#595959">G</div>
<div class="a" style="left:351.42px;width:200px;text-align:center;top:106.62px;font-size:7.8px;line-height:9.75px;color:#595959">H</div>
<div class="a" style="left:399.58px;width:200px;text-align:center;top:106.62px;font-size:7.8px;line-height:9.75px;color:#595959">I</div>
<div class="a" style="left:447.74px;width:200px;text-align:center;top:106.62px;font-size:7.8px;line-height:9.75px;color:#595959">J</div>
<div class="a" style="left:495.90px;width:200px;text-align:center;top:106.62px;font-size:7.8px;line-height:9.75px;color:#595959">K</div>
<div class="a" style="left:544.06px;width:200px;text-align:center;top:106.62px;font-size:7.8px;line-height:9.75px;color:#595959">L</div>
<div class="a" style="left:592.22px;width:200px;text-align:center;top:106.62px;font-size:7.8px;line-height:9.75px;color:#217346">M</div>
<div class="a" style="left:640.38px;width:200px;text-align:center;top:106.62px;font-size:7.8px;line-height:9.75px;color:#595959">N</div>
<div class="a" style="left:688.54px;width:200px;text-align:center;top:106.62px;font-size:7.8px;line-height:9.75px;color:#595959">O</div>
<div class="a" style="left:-91.70px;width:200px;text-align:center;top:131.22px;font-size:7.7px;line-height:9.62px;color:#454545;-webkit-text-stroke:0.25px #454545">1</div>
<div class="a" style="left:-91.70px;width:200px;text-align:center;top:142.92px;font-size:7.7px;line-height:9.62px;color:#454545;-webkit-text-stroke:0.25px #454545">2</div>
<div class="a" style="left:-91.70px;width:200px;text-align:center;top:154.62px;font-size:7.7px;line-height:9.62px;color:#454545;-webkit-text-stroke:0.25px #454545">3</div>
<div class="a" style="left:-91.70px;width:200px;text-align:center;top:170.42px;font-size:7.7px;line-height:9.62px;color:#454545;-webkit-text-stroke:0.25px #454545">4</div>
<div class="a" style="left:-91.70px;width:200px;text-align:center;top:182.12px;font-size:7.7px;line-height:9.62px;color:#454545;-webkit-text-stroke:0.25px #454545">5</div>
<div class="a" style="left:-91.70px;width:200px;text-align:center;top:193.82px;font-size:7.7px;line-height:9.62px;color:#454545;-webkit-text-stroke:0.25px #454545">6</div>
<div class="a" style="left:-91.70px;width:200px;text-align:center;top:205.52px;font-size:7.7px;line-height:9.62px;color:#454545;-webkit-text-stroke:0.25px #454545">7</div>
<div class="a" style="left:-91.70px;width:200px;text-align:center;top:217.22px;font-size:7.7px;line-height:9.62px;color:#454545;-webkit-text-stroke:0.25px #454545">8</div>
<div class="a" style="left:-91.70px;width:200px;text-align:center;top:228.92px;font-size:7.7px;line-height:9.62px;color:#454545;-webkit-text-stroke:0.25px #454545">9</div>
<div class="a" style="left:-91.70px;width:200px;text-align:center;top:240.62px;font-size:7.7px;line-height:9.62px;color:#454545;-webkit-text-stroke:0.25px #454545">10</div>
<div class="a" style="left:-91.70px;width:200px;text-align:center;top:252.32px;font-size:7.7px;line-height:9.62px;color:#454545;-webkit-text-stroke:0.25px #454545">11</div>
<div class="a" style="left:-91.70px;width:200px;text-align:center;top:264.02px;font-size:7.7px;line-height:9.62px;color:#454545;-webkit-text-stroke:0.25px #454545">12</div>
<div class="a" style="left:-91.70px;width:200px;text-align:center;top:275.72px;font-size:7.7px;line-height:9.62px;color:#454545;-webkit-text-stroke:0.25px #454545">13</div>
<div class="a" style="left:-91.70px;width:200px;text-align:center;top:287.42px;font-size:7.7px;line-height:9.62px;color:#454545;-webkit-text-stroke:0.25px #454545">14</div>
<div class="a" style="left:-91.70px;width:200px;text-align:center;top:299.12px;font-size:7.7px;line-height:9.62px;color:#454545;-webkit-text-stroke:0.25px #454545">15</div>
<div class="a" style="left:-91.70px;width:200px;text-align:center;top:310.82px;font-size:7.7px;line-height:9.62px;color:#454545;-webkit-text-stroke:0.25px #454545">16</div>
<div class="a" style="left:-91.70px;width:200px;text-align:center;top:322.52px;font-size:7.7px;line-height:9.62px;color:#454545;-webkit-text-stroke:0.25px #454545">17</div>
<div class="a" style="left:-91.70px;width:200px;text-align:center;top:334.22px;font-size:7.7px;line-height:9.62px;color:#454545;-webkit-text-stroke:0.25px #454545">18</div>
<div class="a" style="left:-91.70px;width:200px;text-align:center;top:345.92px;font-size:7.7px;line-height:9.62px;color:#454545;-webkit-text-stroke:0.25px #454545">19</div>
<div class="a" style="left:-91.70px;width:200px;text-align:center;top:357.62px;font-size:7.7px;line-height:9.62px;color:#454545;-webkit-text-stroke:0.25px #454545">20</div>
<div class="a" style="left:-91.70px;width:200px;text-align:center;top:369.32px;font-size:7.7px;line-height:9.62px;color:#454545;-webkit-text-stroke:0.25px #454545">21</div>
<div class="a" style="left:-91.70px;width:200px;text-align:center;top:381.02px;font-size:7.7px;line-height:9.62px;color:#454545;-webkit-text-stroke:0.25px #454545">22</div>
<div class="a" style="left:-91.70px;width:200px;text-align:center;top:392.72px;font-size:7.7px;line-height:9.62px;color:#217346;-webkit-text-stroke:0.25px #217346">23</div>
<div class="a" style="left:-91.70px;width:200px;text-align:center;top:404.42px;font-size:7.7px;line-height:9.62px;color:#454545;-webkit-text-stroke:0.25px #454545">24</div>
<div class="a" style="left:-91.70px;width:200px;text-align:center;top:416.12px;font-size:7.7px;line-height:9.62px;color:#454545;-webkit-text-stroke:0.25px #454545">25</div>
<div class="a" style="left:-91.70px;width:200px;text-align:center;top:427.82px;font-size:7.7px;line-height:9.62px;color:#454545;-webkit-text-stroke:0.25px #454545">26</div>
<div class="a" style="left:-91.70px;width:200px;text-align:center;top:439.52px;font-size:7.7px;line-height:9.62px;color:#454545;-webkit-text-stroke:0.25px #454545">27</div>
<div class="a" style="left:-91.70px;width:200px;text-align:center;top:451.22px;font-size:7.7px;line-height:9.62px;color:#454545;-webkit-text-stroke:0.25px #454545">28</div>
<div class="a" style="left:-91.70px;width:200px;text-align:center;top:462.92px;font-size:7.7px;line-height:9.62px;color:#454545;-webkit-text-stroke:0.25px #454545">29</div>
<div class="a" style="left:-91.70px;width:200px;text-align:center;top:474.62px;font-size:7.7px;line-height:9.62px;color:#454545;-webkit-text-stroke:0.25px #454545">30</div>
<div class="a" style="left:14.8px;top:390.80px;width:1.3px;height:11.70px;background:#217346"></div>
<svg class="a" style="left:0;top:0" width="800" height="496" viewBox="0 0 800 496"><path d="M16.00 103.5 V119.4" stroke="#e0e0e0" stroke-width="1"/><path d="M90.30 103.5 V119.4" stroke="#e0e0e0" stroke-width="1"/><path d="M165.40 103.5 V119.4" stroke="#e0e0e0" stroke-width="1"/><path d="M234.70 103.5 V119.4" stroke="#e0e0e0" stroke-width="1"/><path d="M282.86 103.5 V119.4" stroke="#e0e0e0" stroke-width="1"/><path d="M331.02 103.5 V119.4" stroke="#e0e0e0" stroke-width="1"/><path d="M379.18 103.5 V119.4" stroke="#e0e0e0" stroke-width="1"/><path d="M427.34 103.5 V119.4" stroke="#e0e0e0" stroke-width="1"/><path d="M475.50 103.5 V119.4" stroke="#e0e0e0" stroke-width="1"/><path d="M523.66 103.5 V119.4" stroke="#e0e0e0" stroke-width="1"/><path d="M571.82 103.5 V119.4" stroke="#e0e0e0" stroke-width="1"/><path d="M619.98 103.5 V119.4" stroke="#e0e0e0" stroke-width="1"/><path d="M668.14 103.5 V119.4" stroke="#e0e0e0" stroke-width="1"/><path d="M716.30 103.5 V119.4" stroke="#e0e0e0" stroke-width="1"/><path d="M764.46 103.5 V119.4" stroke="#e0e0e0" stroke-width="1"/><path d="M0 119.4 H800" stroke="#cfcfcf" stroke-width="1"/><path d="M16 103.5 V480" stroke="#d0d0d0" stroke-width="1"/><path d="M0 141.00 H16" stroke="#eeeeee" stroke-width="0.8"/><path d="M0 152.70 H16" stroke="#eeeeee" stroke-width="0.8"/><path d="M0 164.40 H16" stroke="#eeeeee" stroke-width="0.8"/><path d="M0 180.20 H16" stroke="#eeeeee" stroke-width="0.8"/><path d="M0 191.90 H16" stroke="#eeeeee" stroke-width="0.8"/><path d="M0 203.60 H16" stroke="#eeeeee" stroke-width="0.8"/><path d="M0 215.30 H16" stroke="#eeeeee" stroke-width="0.8"/><path d="M0 227.00 H16" stroke="#eeeeee" stroke-width="0.8"/><path d="M0 238.70 H16" stroke="#eeeeee" stroke-width="0.8"/><path d="M0 250.40 H16" stroke="#eeeeee" stroke-width="0.8"/><path d="M0 262.10 H16" stroke="#eeeeee" stroke-width="0.8"/><path d="M0 273.80 H16" stroke="#eeeeee" stroke-width="0.8"/><path d="M0 285.50 H16" stroke="#eeeeee" stroke-width="0.8"/><path d="M0 297.20 H16" stroke="#eeeeee" stroke-width="0.8"/><path d="M0 308.90 H16" stroke="#eeeeee" stroke-width="0.8"/><path d="M0 320.60 H16" stroke="#eeeeee" stroke-width="0.8"/><path d="M0 332.30 H16" stroke="#eeeeee" stroke-width="0.8"/><path d="M0 344.00 H16" stroke="#eeeeee" stroke-width="0.8"/><path d="M0 355.70 H16" stroke="#eeeeee" stroke-width="0.8"/><path d="M0 367.40 H16" stroke="#eeeeee" stroke-width="0.8"/><path d="M0 379.10 H16" stroke="#eeeeee" stroke-width="0.8"/><path d="M0 390.80 H16" stroke="#eeeeee" stroke-width="0.8"/><path d="M0 402.50 H16" stroke="#eeeeee" stroke-width="0.8"/><path d="M0 414.20 H16" stroke="#eeeeee" stroke-width="0.8"/><path d="M0 425.90 H16" stroke="#eeeeee" stroke-width="0.8"/><path d="M0 437.60 H16" stroke="#eeeeee" stroke-width="0.8"/><path d="M0 449.30 H16" stroke="#eeeeee" stroke-width="0.8"/><path d="M0 461.00 H16" stroke="#eeeeee" stroke-width="0.8"/><path d="M0 472.70 H16" stroke="#eeeeee" stroke-width="0.8"/><path d="M0 484.40 H16" stroke="#eeeeee" stroke-width="0.8"/><path d="M0 496.10 H16" stroke="#eeeeee" stroke-width="0.8"/><path d="M0 507.80 H16" stroke="#eeeeee" stroke-width="0.8"/><path d="M0 519.50 H16" stroke="#eeeeee" stroke-width="0.8"/><path d="M0 531.20 H16" stroke="#eeeeee" stroke-width="0.8"/><path d="M90.30 119.4 V480" stroke="#dcdcdc" stroke-width="1"/><path d="M165.40 119.4 V480" stroke="#dcdcdc" stroke-width="1"/><path d="M234.70 119.4 V480" stroke="#dcdcdc" stroke-width="1"/><path d="M282.86 119.4 V480" stroke="#dcdcdc" stroke-width="1"/><path d="M331.02 119.4 V480" stroke="#dcdcdc" stroke-width="1"/><path d="M379.18 119.4 V480" stroke="#dcdcdc" stroke-width="1"/><path d="M427.34 119.4 V480" stroke="#dcdcdc" stroke-width="1"/><path d="M475.50 119.4 V480" stroke="#dcdcdc" stroke-width="1"/><path d="M523.66 119.4 V480" stroke="#dcdcdc" stroke-width="1"/><path d="M571.82 119.4 V480" stroke="#dcdcdc" stroke-width="1"/><path d="M619.98 119.4 V480" stroke="#dcdcdc" stroke-width="1"/><path d="M668.14 119.4 V480" stroke="#dcdcdc" stroke-width="1"/><path d="M716.30 119.4 V480" stroke="#dcdcdc" stroke-width="1"/><path d="M764.46 119.4 V480" stroke="#dcdcdc" stroke-width="1"/><path d="M16 141.00 H800" stroke="#dcdcdc" stroke-width="1"/><path d="M16 152.70 H800" stroke="#dcdcdc" stroke-width="1"/><path d="M16 164.40 H800" stroke="#dcdcdc" stroke-width="1"/><path d="M16 180.20 H800" stroke="#dcdcdc" stroke-width="1"/><path d="M16 191.90 H800" stroke="#dcdcdc" stroke-width="1"/><path d="M16 203.60 H800" stroke="#dcdcdc" stroke-width="1"/><path d="M16 215.30 H800" stroke="#dcdcdc" stroke-width="1"/><path d="M16 227.00 H800" stroke="#dcdcdc" stroke-width="1"/><path d="M16 238.70 H800" stroke="#dcdcdc" stroke-width="1"/><path d="M16 250.40 H800" stroke="#dcdcdc" stroke-width="1"/><path d="M16 262.10 H800" stroke="#dcdcdc" stroke-width="1"/><path d="M16 273.80 H800" stroke="#dcdcdc" stroke-width="1"/><path d="M16 285.50 H800" stroke="#dcdcdc" stroke-width="1"/><path d="M16 297.20 H800" stroke="#dcdcdc" stroke-width="1"/><path d="M16 308.90 H800" stroke="#dcdcdc" stroke-width="1"/><path d="M16 320.60 H800" stroke="#dcdcdc" stroke-width="1"/><path d="M16 332.30 H800" stroke="#dcdcdc" stroke-width="1"/><path d="M16 344.00 H800" stroke="#dcdcdc" stroke-width="1"/><path d="M16 355.70 H800" stroke="#dcdcdc" stroke-width="1"/><path d="M16 367.40 H800" stroke="#dcdcdc" stroke-width="1"/><path d="M16 379.10 H800" stroke="#dcdcdc" stroke-width="1"/><path d="M16 390.80 H800" stroke="#dcdcdc" stroke-width="1"/><path d="M16 402.50 H800" stroke="#dcdcdc" stroke-width="1"/><path d="M16 414.20 H800" stroke="#dcdcdc" stroke-width="1"/><path d="M16 425.90 H800" stroke="#dcdcdc" stroke-width="1"/><path d="M16 437.60 H800" stroke="#dcdcdc" stroke-width="1"/><path d="M16 449.30 H800" stroke="#dcdcdc" stroke-width="1"/><path d="M16 461.00 H800" stroke="#dcdcdc" stroke-width="1"/><path d="M16 472.70 H800" stroke="#dcdcdc" stroke-width="1"/><path d="M16 484.40 H800" stroke="#dcdcdc" stroke-width="1"/><path d="M16 496.10 H800" stroke="#dcdcdc" stroke-width="1"/><path d="M16 507.80 H800" stroke="#dcdcdc" stroke-width="1"/><path d="M16 519.50 H800" stroke="#dcdcdc" stroke-width="1"/><path d="M16 531.20 H800" stroke="#dcdcdc" stroke-width="1"/></svg>
<div class="a" style="left:16.5px;top:164.40px;width:266.70px;height:15.80px;background:#c55a11"></div>
<div class="a" style="left:18.60px;top:122.62px;font-size:14.6px;line-height:18.25px;color:#000;letter-spacing:-0.42px;-webkit-text-stroke:0.25px #000">Sales Data</div>
<div class="a" style="left:167.60px;top:125.55px;font-size:12.2px;line-height:15.25px;color:#000;letter-spacing:-0.05px;-webkit-text-stroke:0.25px #000">2019-2020</div>
<div class="a" style="left:18.70px;top:166.90px;font-size:10.6px;line-height:13.25px;color:#fff;-webkit-text-stroke:0.2px #fff">Quarter</div>
<div class="a" style="left:93.20px;top:166.90px;font-size:10.6px;line-height:13.25px;color:#fff;letter-spacing:0.3px;-webkit-text-stroke:0.2px #fff">Month</div>
<div class="a" style="left:167.40px;top:168.09px;font-size:10.1px;line-height:12.62px;color:#fff;-webkit-text-stroke:0.2px #fff">Salesman</div>
<div class="a" style="left:237.00px;top:167.99px;font-size:10.1px;line-height:12.62px;color:#fff;-webkit-text-stroke:0.2px #fff">Sales</div>
<div class="a" style="left:-210.40px;width:300px;text-align:right;top:181.77px;font-size:7.85px;line-height:9.81px;color:#000;-webkit-text-stroke:0.12px #000">1</div>
<div class="a" style="left:92.30px;top:181.77px;font-size:7.85px;line-height:9.81px;color:#000;-webkit-text-stroke:0.12px #000">Jan</div>
<div class="a" style="left:167.40px;top:181.77px;font-size:7.85px;line-height:9.81px;color:#000;-webkit-text-stroke:0.12px #000">Nancy</div>
<div class="a" style="left:-17.50px;width:300px;text-align:right;top:181.77px;font-size:7.85px;line-height:9.81px;color:#000;-webkit-text-stroke:0.12px #000">$10,000.00</div>
<div class="a" style="left:92.30px;top:193.47px;font-size:7.85px;line-height:9.81px;color:#000;-webkit-text-stroke:0.12px #000">Feb</div>
<div class="a" style="left:167.40px;top:193.47px;font-size:7.85px;line-height:9.81px;color:#000;-webkit-text-stroke:0.12px #000">Bob</div>
<div class="a" style="left:-17.50px;width:300px;text-align:right;top:193.47px;font-size:7.85px;line-height:9.81px;color:#000;-webkit-text-stroke:0.12px #000">$20,300.00</div>
<div class="a" style="left:92.30px;top:205.17px;font-size:7.85px;line-height:9.81px;color:#000;-webkit-text-stroke:0.12px #000">Mar</div>
<div class="a" style="left:167.40px;top:205.17px;font-size:7.85px;line-height:9.81px;color:#000;-webkit-text-stroke:0.12px #000">James</div>
<div class="a" style="left:-17.50px;width:300px;text-align:right;top:205.17px;font-size:7.85px;line-height:9.81px;color:#000;-webkit-text-stroke:0.12px #000">$42,002.00</div>
<div class="a" style="left:-210.40px;width:300px;text-align:right;top:216.87px;font-size:7.85px;line-height:9.81px;color:#000;-webkit-text-stroke:0.12px #000">2</div>
<div class="a" style="left:92.30px;top:216.87px;font-size:7.85px;line-height:9.81px;color:#000;-webkit-text-stroke:0.12px #000">April</div>
<div class="a" style="left:167.40px;top:216.87px;font-size:7.85px;line-height:9.81px;color:#000;-webkit-text-stroke:0.12px #000">Sarah</div>
<div class="a" style="left:-17.50px;width:300px;text-align:right;top:216.87px;font-size:7.85px;line-height:9.81px;color:#000;-webkit-text-stroke:0.12px #000">$23,049.00</div>
<div class="a" style="left:92.30px;top:228.57px;font-size:7.85px;line-height:9.81px;color:#000;-webkit-text-stroke:0.12px #000">May</div>
<div class="a" style="left:167.40px;top:228.57px;font-size:7.85px;line-height:9.81px;color:#000;-webkit-text-stroke:0.12px #000">Pricilla</div>
<div class="a" style="left:-17.50px;width:300px;text-align:right;top:228.57px;font-size:7.85px;line-height:9.81px;color:#000;-webkit-text-stroke:0.12px #000">$25,999.00</div>
<div class="a" style="left:92.30px;top:240.27px;font-size:7.85px;line-height:9.81px;color:#000;-webkit-text-stroke:0.12px #000">June</div>
<div class="a" style="left:167.40px;top:240.27px;font-size:7.85px;line-height:9.81px;color:#000;-webkit-text-stroke:0.12px #000">Mary</div>
<div class="a" style="left:-17.50px;width:300px;text-align:right;top:240.27px;font-size:7.85px;line-height:9.81px;color:#000;-webkit-text-stroke:0.12px #000">$35,400.00</div>
<div class="a" style="left:-210.40px;width:300px;text-align:right;top:251.97px;font-size:7.85px;line-height:9.81px;color:#000;-webkit-text-stroke:0.12px #000">3</div>
<div class="a" style="left:92.30px;top:251.97px;font-size:7.85px;line-height:9.81px;color:#000;-webkit-text-stroke:0.12px #000">July</div>
<div class="a" style="left:167.40px;top:251.97px;font-size:7.85px;line-height:9.81px;color:#000;-webkit-text-stroke:0.12px #000">Ann</div>
<div class="a" style="left:-17.50px;width:300px;text-align:right;top:251.97px;font-size:7.85px;line-height:9.81px;color:#000;-webkit-text-stroke:0.12px #000">$32,400.00</div>
<div class="a" style="left:92.30px;top:263.67px;font-size:7.85px;line-height:9.81px;color:#000;-webkit-text-stroke:0.12px #000">Aug</div>
<div class="a" style="left:167.40px;top:263.67px;font-size:7.85px;line-height:9.81px;color:#000;-webkit-text-stroke:0.12px #000">Ivan</div>
<div class="a" style="left:-17.50px;width:300px;text-align:right;top:263.67px;font-size:7.85px;line-height:9.81px;color:#000;-webkit-text-stroke:0.12px #000">$45,000.00</div>
<div class="a" style="left:92.30px;top:275.37px;font-size:7.85px;line-height:9.81px;color:#000;-webkit-text-stroke:0.12px #000">Sept</div>
<div class="a" style="left:167.40px;top:275.37px;font-size:7.85px;line-height:9.81px;color:#000;-webkit-text-stroke:0.12px #000">Adam</div>
<div class="a" style="left:-17.50px;width:300px;text-align:right;top:275.37px;font-size:7.85px;line-height:9.81px;color:#000;-webkit-text-stroke:0.12px #000">$45,390.00</div>
<div class="a" style="left:-210.40px;width:300px;text-align:right;top:287.07px;font-size:7.85px;line-height:9.81px;color:#000;-webkit-text-stroke:0.12px #000">4</div>
<div class="a" style="left:92.30px;top:287.07px;font-size:7.85px;line-height:9.81px;color:#000;-webkit-text-stroke:0.12px #000">Oct</div>
<div class="a" style="left:167.40px;top:287.07px;font-size:7.85px;line-height:9.81px;color:#000;-webkit-text-stroke:0.12px #000">Bob</div>
<div class="a" style="left:-17.50px;width:300px;text-align:right;top:287.07px;font-size:7.85px;line-height:9.81px;color:#000;-webkit-text-stroke:0.12px #000">$34,555.00</div>
<div class="a" style="left:92.30px;top:298.77px;font-size:7.85px;line-height:9.81px;color:#000;-webkit-text-stroke:0.12px #000">Nov</div>
<div class="a" style="left:167.40px;top:298.77px;font-size:7.85px;line-height:9.81px;color:#000;-webkit-text-stroke:0.12px #000">Mike</div>
<div class="a" style="left:-17.50px;width:300px;text-align:right;top:298.77px;font-size:7.85px;line-height:9.81px;color:#000;-webkit-text-stroke:0.12px #000">$32,019.00</div>
<div class="a" style="left:92.30px;top:310.47px;font-size:7.85px;line-height:9.81px;color:#000;-webkit-text-stroke:0.12px #000">Dec</div>
<div class="a" style="left:167.40px;top:310.47px;font-size:7.85px;line-height:9.81px;color:#000;-webkit-text-stroke:0.12px #000">Macie</div>
<div class="a" style="left:-17.50px;width:300px;text-align:right;top:310.47px;font-size:7.85px;line-height:9.81px;color:#000;-webkit-text-stroke:0.12px #000">$45,029.00</div>
<div class="a" style="left:235px;top:120px;width:92px;height:28.5px;background:#fff"></div>
<svg class="a" style="left:234px;top:119px" width="32" height="30" viewBox="234 119 32 30">
<defs><clipPath id="lc"><circle cx="249.4" cy="134" r="14.1"/></clipPath></defs>
<g clip-path="url(#lc)">
<rect x="234" y="119" width="19.3" height="30" fill="#a3a3a3"/>
<rect x="253.8" y="119" width="12" height="30" fill="#ee1c25"/>
<path d="M238.5 146 L252.8 120.5" stroke="#fff" stroke-width="1.5"/>
<path d="M244.8 137.4 H253" stroke="#fff" stroke-width="1.4"/>
</g></svg>
<div class="a" style="left:265.00px;top:131.30px;font-size:14px;line-height:17.5px;color:#999;letter-spacing:1.1px;-webkit-text-stroke:0.35px #999">ACME</div>
<div class="a" style="left:308.80px;top:136.25px;font-size:8.6px;line-height:10.75px;color:#e8202c;font-weight:bold;letter-spacing:-0.1px">INC.</div>
<div class="a" style="left:318.4px;top:162.9px;width:417.1px;height:197.1px;background:#fff;border:1px solid #d9d9d9"></div>
<div class="a" style="left:426.50px;width:200px;text-align:center;top:168.06px;font-size:9.2px;line-height:11.5px;color:#505050;-webkit-text-stroke:0.1px #505050">Sales by Quarter</div>
<svg class="a" style="left:0;top:0" width="800" height="496" viewBox="0 0 800 496"><path d="M526.500 226.000 A43.0 43.0 0 0 1 566.078 285.811 L546.381 277.444 A21.6 21.6 0 0 0 526.500 247.400 Z" fill="#A5A5A5" stroke="#fff" stroke-width="1.3" stroke-linejoin="miter"/><path d="M526.500 204.000 A65.0 65.0 0 0 1 569.804 220.526 L555.147 236.933 A43.0 43.0 0 0 0 526.500 226.000 Z" fill="#A5A5A5" stroke="#fff" stroke-width="1.3" stroke-linejoin="miter"/><path d="M526.500 182.500 A86.5 86.5 0 0 1 584.128 204.492 L569.804 220.526 A65.0 65.0 0 0 0 526.500 204.000 Z" fill="#A5A5A5" stroke="#fff" stroke-width="1.3" stroke-linejoin="miter"/><path d="M569.804 220.526 A65.0 65.0 0 0 1 591.042 261.296 L569.197 263.903 A43.0 43.0 0 0 0 555.147 236.933 Z" fill="#A5A5A5" stroke="#fff" stroke-width="1.3" stroke-linejoin="miter"/><path d="M584.128 204.492 A86.5 86.5 0 0 1 612.390 258.748 L591.042 261.296 A65.0 65.0 0 0 0 569.804 220.526 Z" fill="#A5A5A5" stroke="#fff" stroke-width="1.3" stroke-linejoin="miter"/><path d="M591.042 261.296 A65.0 65.0 0 0 1 586.327 294.412 L566.078 285.811 A43.0 43.0 0 0 0 569.197 263.903 Z" fill="#A5A5A5" stroke="#fff" stroke-width="1.3" stroke-linejoin="miter"/><path d="M612.390 258.748 A86.5 86.5 0 0 1 606.116 302.817 L586.327 294.412 A65.0 65.0 0 0 0 591.042 261.296 Z" fill="#A5A5A5" stroke="#fff" stroke-width="1.3" stroke-linejoin="miter"/><path d="M566.078 285.811 A43.0 43.0 0 0 1 501.389 303.906 L513.886 286.534 A21.6 21.6 0 0 0 546.381 277.444 Z" fill="#FFC000" stroke="#fff" stroke-width="1.3" stroke-linejoin="miter"/><path d="M586.327 294.412 A65.0 65.0 0 0 1 554.527 327.647 L545.041 307.797 A43.0 43.0 0 0 0 566.078 285.811 Z" fill="#FFC000" stroke="#fff" stroke-width="1.3" stroke-linejoin="miter"/><path d="M606.116 302.817 A86.5 86.5 0 0 1 563.798 347.046 L554.527 327.647 A65.0 65.0 0 0 0 586.327 294.412 Z" fill="#FFC000" stroke="#fff" stroke-width="1.3" stroke-linejoin="miter"/><path d="M554.527 327.647 A65.0 65.0 0 0 1 519.411 333.612 L521.811 311.744 A43.0 43.0 0 0 0 545.041 307.797 Z" fill="#FFC000" stroke="#fff" stroke-width="1.3" stroke-linejoin="miter"/><path d="M563.798 347.046 A86.5 86.5 0 0 1 517.067 354.984 L519.411 333.612 A65.0 65.0 0 0 0 554.527 327.647 Z" fill="#FFC000" stroke="#fff" stroke-width="1.3" stroke-linejoin="miter"/><path d="M519.411 333.612 A65.0 65.0 0 0 1 488.542 321.765 L501.389 303.906 A43.0 43.0 0 0 0 521.811 311.744 Z" fill="#FFC000" stroke="#fff" stroke-width="1.3" stroke-linejoin="miter"/><path d="M517.067 354.984 A86.5 86.5 0 0 1 475.986 339.218 L488.542 321.765 A65.0 65.0 0 0 0 519.411 333.612 Z" fill="#FFC000" stroke="#fff" stroke-width="1.3" stroke-linejoin="miter"/><path d="M501.389 303.906 A43.0 43.0 0 0 1 487.053 251.885 L506.685 260.403 A21.6 21.6 0 0 0 513.886 286.534 Z" fill="#ED7D31" stroke="#fff" stroke-width="1.3" stroke-linejoin="miter"/><path d="M488.542 321.765 A65.0 65.0 0 0 1 466.101 293.021 L486.544 284.891 A43.0 43.0 0 0 0 501.389 303.906 Z" fill="#ED7D31" stroke="#fff" stroke-width="1.3" stroke-linejoin="miter"/><path d="M475.986 339.218 A86.5 86.5 0 0 1 446.123 300.966 L466.101 293.021 A65.0 65.0 0 0 0 488.542 321.765 Z" fill="#ED7D31" stroke="#fff" stroke-width="1.3" stroke-linejoin="miter"/><path d="M466.101 293.021 A65.0 65.0 0 0 1 461.550 266.458 L483.533 267.319 A43.0 43.0 0 0 0 486.544 284.891 Z" fill="#ED7D31" stroke="#fff" stroke-width="1.3" stroke-linejoin="miter"/><path d="M446.123 300.966 A86.5 86.5 0 0 1 440.066 265.618 L461.550 266.458 A65.0 65.0 0 0 0 466.101 293.021 Z" fill="#ED7D31" stroke="#fff" stroke-width="1.3" stroke-linejoin="miter"/><path d="M461.550 266.458 A65.0 65.0 0 0 1 466.871 243.128 L487.053 251.885 A43.0 43.0 0 0 0 483.533 267.319 Z" fill="#ED7D31" stroke="#fff" stroke-width="1.3" stroke-linejoin="miter"/><path d="M440.066 265.618 A86.5 86.5 0 0 1 447.147 234.571 L466.871 243.128 A65.0 65.0 0 0 0 461.550 266.458 Z" fill="#ED7D31" stroke="#fff" stroke-width="1.3" stroke-linejoin="miter"/><path d="M487.053 251.885 A43.0 43.0 0 0 1 526.500 226.000 L526.500 247.400 A21.6 21.6 0 0 0 506.685 260.403 Z" fill="#5B9BD5" stroke="#fff" stroke-width="1.3" stroke-linejoin="miter"/><path d="M466.871 243.128 A65.0 65.0 0 0 1 496.097 211.549 L506.387 230.994 A43.0 43.0 0 0 0 487.053 251.885 Z" fill="#5B9BD5" stroke="#fff" stroke-width="1.3" stroke-linejoin="miter"/><path d="M447.147 234.571 A86.5 86.5 0 0 1 486.041 192.545 L496.097 211.549 A65.0 65.0 0 0 0 466.871 243.128 Z" fill="#5B9BD5" stroke="#fff" stroke-width="1.3" stroke-linejoin="miter"/><path d="M496.097 211.549 A65.0 65.0 0 0 1 516.103 204.837 L519.622 226.554 A43.0 43.0 0 0 0 506.387 230.994 Z" fill="#5B9BD5" stroke="#fff" stroke-width="1.3" stroke-linejoin="miter"/><path d="M486.041 192.545 A86.5 86.5 0 0 1 512.665 183.614 L516.103 204.837 A65.0 65.0 0 0 0 496.097 211.549 Z" fill="#5B9BD5" stroke="#fff" stroke-width="1.3" stroke-linejoin="miter"/><path d="M516.103 204.837 A65.0 65.0 0 0 1 526.500 204.000 L526.500 226.000 A43.0 43.0 0 0 0 519.622 226.554 Z" fill="#5B9BD5" stroke="#fff" stroke-width="1.3" stroke-linejoin="miter"/><path d="M512.665 183.614 A86.5 86.5 0 0 1 526.500 182.500 L526.500 204.000 A65.0 65.0 0 0 0 516.103 204.837 Z" fill="#5B9BD5" stroke="#fff" stroke-width="1.3" stroke-linejoin="miter"/><text x="553.437" y="251.176" transform="rotate(-33.493 553.437 251.176)" text-anchor="middle" dominant-baseline="central" font-family="Liberation Sans" font-size="6.2" fill="#fff" stroke="#fff" stroke-width="0.15">3</text><text x="545.753" y="218.549" transform="rotate(-69.112 545.753 218.549)" text-anchor="middle" dominant-baseline="central" font-family="Liberation Sans" font-size="6.2" fill="#fff" stroke="#fff" stroke-width="0.15">Sept</text><text x="553.508" y="198.228" transform="rotate(-69.112 553.508 198.228)" text-anchor="middle" dominant-baseline="central" font-family="Liberation Sans" font-size="6.2" fill="#fff" stroke="#fff" stroke-width="0.15">Adam</text><text x="574.392" y="244.053" transform="rotate(-27.515 574.392 244.053)" text-anchor="middle" dominant-baseline="central" font-family="Liberation Sans" font-size="6.2" fill="#fff" stroke="#fff" stroke-width="0.15">Aug</text><text x="593.682" y="234.004" transform="rotate(-27.515 593.682 234.004)" text-anchor="middle" dominant-baseline="central" font-family="Liberation Sans" font-size="6.2" fill="#fff" stroke="#fff" stroke-width="0.15">Ivan</text><text x="579.961" y="276.612" transform="rotate(8.103 579.961 276.612)" text-anchor="middle" dominant-baseline="central" font-family="Liberation Sans" font-size="6.2" fill="#fff" stroke="#fff" stroke-width="0.15">July</text><text x="601.494" y="279.678" transform="rotate(8.103 601.494 279.678)" text-anchor="middle" dominant-baseline="central" font-family="Liberation Sans" font-size="6.2" fill="#fff" stroke="#fff" stroke-width="0.15">Ann</text><text x="535.201" y="300.106" transform="rotate(74.372 535.201 300.106)" text-anchor="middle" dominant-baseline="central" font-family="Liberation Sans" font-size="6.2" fill="#262626" stroke="#262626" stroke-width="0.15">4</text><text x="565.517" y="306.332" transform="rotate(43.735 565.517 306.332)" text-anchor="middle" dominant-baseline="central" font-family="Liberation Sans" font-size="6.2" fill="#262626" stroke="#262626" stroke-width="0.15">Dec</text><text x="581.233" y="321.368" transform="rotate(43.735 581.233 321.368)" text-anchor="middle" dominant-baseline="central" font-family="Liberation Sans" font-size="6.2" fill="#262626" stroke="#262626" stroke-width="0.15">Macie</text><text x="535.544" y="322.237" transform="rotate(80.359 535.544 322.237)" text-anchor="middle" dominant-baseline="central" font-family="Liberation Sans" font-size="6.2" fill="#262626" stroke="#262626" stroke-width="0.15">Oct</text><text x="539.186" y="343.680" transform="rotate(80.359 539.186 343.680)" text-anchor="middle" dominant-baseline="central" font-family="Liberation Sans" font-size="6.2" fill="#262626" stroke="#262626" stroke-width="0.15">Bob</text><text x="507.152" y="319.415" transform="rotate(-69.004 507.152 319.415)" text-anchor="middle" dominant-baseline="central" font-family="Liberation Sans" font-size="6.2" fill="#262626" stroke="#262626" stroke-width="0.15">Nov</text><text x="499.359" y="339.721" transform="rotate(-69.004 499.359 339.721)" text-anchor="middle" dominant-baseline="central" font-family="Liberation Sans" font-size="6.2" fill="#262626" stroke="#262626" stroke-width="0.15">Mike</text><text x="495.361" y="277.581" transform="rotate(-15.407 495.361 277.581)" text-anchor="middle" dominant-baseline="central" font-family="Liberation Sans" font-size="6.2" fill="#fff" stroke="#fff" stroke-width="0.15">2</text><text x="483.935" y="302.230" transform="rotate(-37.979 483.935 302.230)" text-anchor="middle" dominant-baseline="central" font-family="Liberation Sans" font-size="6.2" fill="#fff" stroke="#fff" stroke-width="0.15">June</text><text x="466.791" y="315.614" transform="rotate(-37.979 466.791 315.614)" text-anchor="middle" dominant-baseline="central" font-family="Liberation Sans" font-size="6.2" fill="#fff" stroke="#fff" stroke-width="0.15">Mary</text><text x="473.276" y="278.120" transform="rotate(-9.724 473.276 278.120)" text-anchor="middle" dominant-baseline="central" font-family="Liberation Sans" font-size="6.2" fill="#fff" stroke="#fff" stroke-width="0.15">May</text><text x="451.838" y="281.794" transform="rotate(-9.724 451.838 281.794)" text-anchor="middle" dominant-baseline="central" font-family="Liberation Sans" font-size="6.2" fill="#fff" stroke="#fff" stroke-width="0.15">Pricilla</text><text x="473.852" y="256.992" transform="rotate(12.848 473.852 256.992)" text-anchor="middle" dominant-baseline="central" font-family="Liberation Sans" font-size="6.2" fill="#fff" stroke="#fff" stroke-width="0.15">April</text><text x="452.646" y="252.156" transform="rotate(12.848 452.646 252.156)" text-anchor="middle" dominant-baseline="central" font-family="Liberation Sans" font-size="6.2" fill="#fff" stroke="#fff" stroke-width="0.15">Sarah</text><text x="508.779" y="241.995" transform="rotate(56.727 508.779 241.995)" text-anchor="middle" dominant-baseline="central" font-family="Liberation Sans" font-size="6.2" fill="#fff" stroke="#fff" stroke-width="0.15">1</text><text x="486.868" y="232.322" transform="rotate(42.784 486.868 232.322)" text-anchor="middle" dominant-baseline="central" font-family="Liberation Sans" font-size="6.2" fill="#fff" stroke="#fff" stroke-width="0.15">Mar</text><text x="470.905" y="217.548" transform="rotate(42.784 470.905 217.548)" text-anchor="middle" dominant-baseline="central" font-family="Liberation Sans" font-size="6.2" fill="#fff" stroke="#fff" stroke-width="0.15">James</text><text x="509.325" y="217.804" transform="rotate(71.454 509.325 217.804)" text-anchor="middle" dominant-baseline="central" font-family="Liberation Sans" font-size="6.2" fill="#fff" stroke="#fff" stroke-width="0.15">Feb</text><text x="502.407" y="197.184" transform="rotate(71.454 502.407 197.184)" text-anchor="middle" dominant-baseline="central" font-family="Liberation Sans" font-size="6.2" fill="#fff" stroke="#fff" stroke-width="0.15">Bob</text><text x="520.422" y="193.494" transform="rotate(85.398 520.422 193.494)" text-anchor="middle" dominant-baseline="central" font-family="Liberation Sans" font-size="6.2" fill="#fff" stroke="#fff" stroke-width="0.15">Nancy</text></svg>
<div class="a" style="left:667.54px;top:390.20px;width:49.36px;height:12.90px;border:1.3px solid #217346"></div>
<div class="a" style="left:714.60px;top:400.80px;width:3.6px;height:3.6px;background:#1d5f39"></div>
<div class="a" style="left:17.9px;top:473.9px;width:597.9px;height:4.3px;border-radius:2.2px;background:#959595"></div>
<div class="a" style="left:0;top:479.6px;width:800px;height:16.4px;background:#efefef;border-top:1px solid #e0e0e0"></div>
<svg class="a" style="left:9px;top:485.5px" width="6" height="8" viewBox="0 0 6 8"><path d="M5.2 0.6 V7.2 L0.8 3.9 Z" fill="#9c9c9c"/></svg>
<svg class="a" style="left:23.5px;top:485.5px" width="6" height="8" viewBox="0 0 6 8"><path d="M0.8 0.6 V7.2 L5.2 3.9 Z" fill="#9c9c9c"/></svg>
<div class="a" style="left:37.7px;top:479.6px;width:48.5px;height:15px;background:#fff;border-radius:0 0 2px 2px;box-shadow:0 0.6px 1px rgba(0,0,0,0.25)"></div>
<div class="a" style="left:-38.20px;width:200px;text-align:center;top:482.51px;font-size:7.3px;line-height:9.12px;color:#2a8553;font-weight:bold">Sheet1</div>
<div class="a" style="left:-1.60px;width:200px;text-align:center;top:482.51px;font-size:11px;line-height:13.75px;color:#444">+</div>
<div class="a" style="left:108.10px;top:480.5px;width:1px;height:15.5px;background:#dadada"></div></body></html>
